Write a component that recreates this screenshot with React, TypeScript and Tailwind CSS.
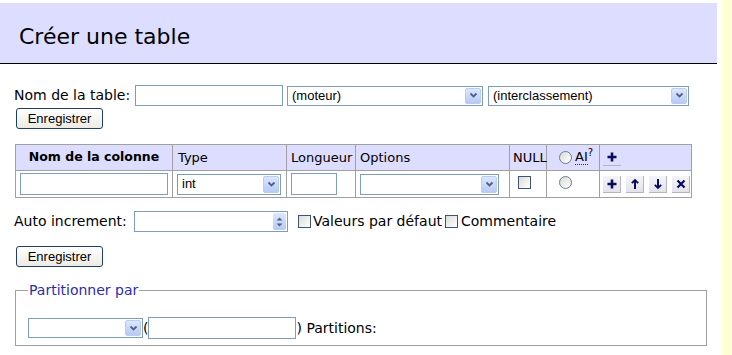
import clsx from "clsx";

const ctl = "font-['Liberation_Sans',Arial,sans-serif] text-[13px] text-black";

function Chevron() {
  return (
    <svg width="9" height="7" viewBox="0 0 9 7">
      <path d="M1.5 1.5 L4.5 4.5 L7.5 1.5" fill="none" stroke="#4d6185" strokeWidth="1.8" />
    </svg>
  );
}

function FakeSelect({ className, value }: { className: string; value?: string }) {
  return (
    <div className={clsx("flex items-stretch border border-[#7f9db9] bg-white p-[1px]", ctl, className)}>
      <span className="flex-1 truncate pl-[3px] leading-[16px]">{value}</span>
      <span className="flex w-[16px] items-center justify-center rounded-[2px] border border-[#bccbef] bg-[linear-gradient(#dce6fd,#b7caf5)]">
        <Chevron />
      </span>
    </div>
  );
}

function FakeInput({ className }: { className: string }) {
  return <div className={clsx("border border-[#7f9db9] bg-white", className)} />;
}

function Button({ className }: { className?: string }) {
  return (
    <button
      className={clsx(
        "h-[21px] w-[87px] rounded-[3px] border border-[#1f3f66] bg-[linear-gradient(#ffffff,#eceae2)] leading-[19px]",
        ctl,
        className
      )}
    >
      Enregistrer
    </button>
  );
}

function Checkbox({ className }: { className?: string }) {
  return (
    <span
      className={clsx(
        "inline-block size-[13px] shrink-0 border border-[#3d5475] bg-[linear-gradient(135deg,#dcdcd6,#ffffff)]",
        className
      )}
    />
  );
}

function Radio({ className }: { className?: string }) {
  return (
    <span
      className={clsx(
        "inline-block size-[13px] shrink-0 rounded-full border border-[#6b7d94] bg-[linear-gradient(135deg,#dcdcd6,#ffffff)]",
        className
      )}
    />
  );
}

function IconButton({ icon, flat }: { icon: "plus" | "up" | "down" | "x"; flat?: boolean }) {
  return (
    <span
      className={clsx(
        "flex h-[17px] w-[18px] items-center justify-center border-b border-[#b4b4c4]",
        flat ? "bg-transparent" : "border-r bg-[linear-gradient(#f4f4f8,#e2e2ea)]"
      )}
    >
      <svg width="12" height="12" viewBox="0 0 12 12" fill="none" stroke="#0a0a5e">
        {icon === "plus" && <path d="M6 1.5v9M1.5 6h9" strokeWidth="2.6" />}
        {icon === "up" && (
          <>
            <path d="M6 3v8" strokeWidth="2" />
            <path d="M2.8 5.2 6 2l3.2 3.2" strokeWidth="1.8" />
          </>
        )}
        {icon === "down" && (
          <>
            <path d="M6 1v8" strokeWidth="2" />
            <path d="M2.8 6.8 6 10l3.2-3.2" strokeWidth="1.8" />
          </>
        )}
        {icon === "x" && <path d="M2.5 2.5l7 7M9.5 2.5l-7 7" strokeWidth="2.2" />}
      </svg>
    </span>
  );
}

export default function App() {
  return (
    <div className="flex min-h-[355px] w-[732px] bg-white font-['DejaVu_Sans',Verdana,sans-serif] text-[14px] text-black">
      <div className="w-[722px] pt-[3px]">
        {/* Title */}
        <div className="h-[61px] w-[717px] border-b border-black bg-[#ddf] pl-[19px] pt-[21px]">
          <h2 className="text-[22px] font-normal leading-[26px]">Créer une table</h2>
        </div>

        {/* Table name */}
        <div className="mt-[21px] flex h-[21px] items-center pl-[14px]">
          <span className="w-[121px]">Nom de la table:</span>
          <FakeInput className="h-[21px] w-[148px]" />
          <FakeSelect className="ml-[4px] h-[20px] w-[196px]" value="(moteur)" />
          <FakeSelect className="ml-[5px] h-[20px] w-[201px]" value="(interclassement)" />
        </div>
        <div className="mt-[2px] pl-[16px]">
          <Button />
        </div>

        {/* Columns */}
        <table className="ml-[15px] mt-[15px] w-[676px] table-fixed border-collapse border border-[#a0a0a0] text-[13px]">
          <thead>
            <tr className="h-[26px] bg-[#ddf]">
              <th className="w-[157px] border border-[#a0a0a0] text-center text-[12.5px] font-bold">Nom de la colonne</th>
              <td className="w-[114px] border border-[#a0a0a0] pl-[5px]">Type</td>
              <td className="w-[69px] border border-[#a0a0a0] pl-[4px]">Longueur</td>
              <td className="w-[154px] border border-[#a0a0a0] pl-[4px]">Options</td>
              <td className="w-[37px] border border-[#a0a0a0] pl-[3px]">NULL</td>
              <td className="w-[53px] border border-[#a0a0a0] pl-[12px]">
                <div className="flex items-center">
                  <Radio />
                  <span className="ml-[3px] border-b border-dotted border-[#333] leading-[14px]">AI</span>
                  <sup className="text-[10px]">?</sup>
                </div>
              </td>
              <td className="w-[92px] border border-[#a0a0a0] pl-[3px]">
                <IconButton icon="plus" flat />
              </td>
            </tr>
          </thead>
          <tbody>
            <tr className="h-[27px]">
              <td className="border border-[#a0a0a0] pl-[4px]">
                <FakeInput className="h-[22px] w-[148px]" />
              </td>
              <td className="border border-[#a0a0a0] pl-[4px]">
                <FakeSelect className="h-[21px] w-[104px]" value="int" />
              </td>
              <td className="border border-[#a0a0a0] pl-[4px]">
                <FakeInput className="h-[22px] w-[46px]" />
              </td>
              <td className="border border-[#a0a0a0] pl-[4px]">
                <FakeSelect className="h-[21px] w-[139px]" />
              </td>
              <td className="border border-[#a0a0a0] pl-[8px]">
                <Checkbox className="mt-[2px] block" />
              </td>
              <td className="border border-[#a0a0a0] pl-[12px]">
                <Radio className="mt-[2px] block" />
              </td>
              <td className="border border-[#a0a0a0] pl-[3px]">
                <div className="flex gap-[5px]">
                  <IconButton icon="plus" />
                  <IconButton icon="up" />
                  <IconButton icon="down" />
                  <IconButton icon="x" />
                </div>
              </td>
            </tr>
          </tbody>
        </table>

        {/* Auto increment */}
        <div className="mt-[13px] flex h-[21px] items-center pl-[14px]">
          <span className="w-[120px]">Auto increment:</span>
          <div className="flex h-[21px] w-[154px] justify-end border border-[#7f9db9] bg-white p-[1px]">
            <span className="flex w-[13px] flex-col items-center justify-center gap-[2px] rounded-[2px] bg-[linear-gradient(#dce6fd,#b7caf5)]">
              <svg width="7" height="4" viewBox="0 0 7 4">
                <path d="M0.5 3.5 3.5 0.5 6.5 3.5" fill="#4d6185" />
              </svg>
              <svg width="7" height="4" viewBox="0 0 7 4">
                <path d="M0.5 0.5 3.5 3.5 6.5 0.5" fill="#4d6185" />
              </svg>
            </span>
          </div>
          <Checkbox className="ml-[10px]" />
          <span className="ml-[2px]">Valeurs par défaut</span>
          <Checkbox className="ml-[3px]" />
          <span className="ml-[3px]">Commentaire</span>
        </div>
        <div className="mt-[14px] pl-[16px]">
          <Button />
        </div>

        {/* Partitions */}
        <fieldset className="ml-[15px] mt-[15px] w-[692px] border border-[#a0a0a0] pb-[6px] pl-[12px] pt-[19px]">
          <legend className="px-[1px] leading-[16px] text-[#2d2da8]">Partitionner par</legend>
          <div className="flex h-[22px] items-center">
            <FakeSelect className="h-[20px] w-[115px]" />
            <span>(</span>
            <FakeInput className="h-[22px] w-[148px]" />
            <span>) Partitions:</span>
          </div>
        </fieldset>
      </div>
      <div className="w-[10px] bg-[#ffffd4]" />
    </div>
  );
}
